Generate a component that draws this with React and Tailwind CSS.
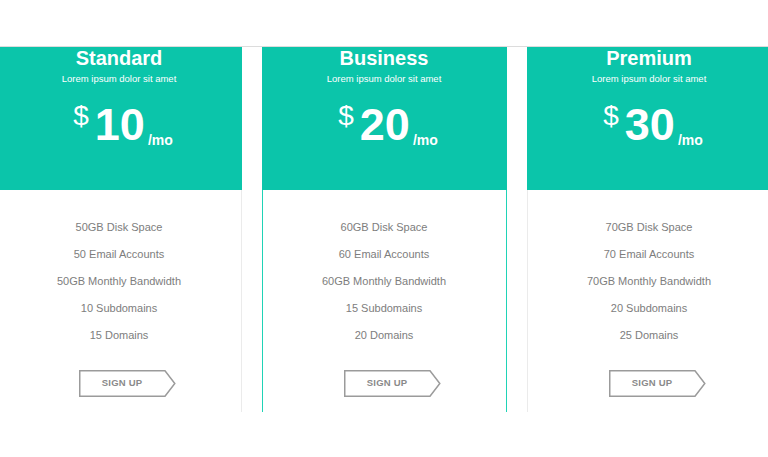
import React from "react";

const plans = [
  {
    name: "Standard",
    price: "10",
    features: ["50GB Disk Space", "50 Email Accounts", "50GB Monthly Bandwidth", "10 Subdomains", "15 Domains"],
    border: "border-[#ebebeb]",
  },
  {
    name: "Business",
    price: "20",
    features: ["60GB Disk Space", "60 Email Accounts", "60GB Monthly Bandwidth", "15 Subdomains", "20 Domains"],
    border: "border-[#1fd3b6]",
  },
  {
    name: "Premium",
    price: "30",
    features: ["70GB Disk Space", "70 Email Accounts", "70GB Monthly Bandwidth", "20 Subdomains", "25 Domains"],
    border: "border-[#ebebeb]",
  },
];

function SignUp() {
  return (
    <div className="relative w-[97px] h-[27px] ml-[17px] mt-[21px]">
      <svg className="absolute inset-0" width="97" height="27" viewBox="0 0 97 27">
        <path d="M0.75 0.75 H86 L95.8 13.5 L86 26.25 H0.75 Z" fill="none" stroke="#9b9b9b" strokeWidth="1.5" />
      </svg>
      <div className="relative w-[86px] h-[27px] flex items-center justify-center text-[9.5px] font-bold text-[#8a8a8a] tracking-[0.2px]">
        SIGN UP
      </div>
    </div>
  );
}

function Card({ plan }) {
  return (
    <div className="w-[245px] shrink-0 flex flex-col">
      <div className="h-[143px] bg-[#0bc5aa] flex flex-col items-center text-white">
        <div className="text-[20px] leading-[22px] font-bold">{plan.name}</div>
        <div className="text-[9.5px] leading-[12px] mt-[4px]">Lorem ipsum dolor sit amet</div>
        <div className="flex items-end mt-[17px] ml-[8px] h-[45px]">
          <span className="self-start text-[28px] leading-none">$</span>
          <span className="text-[45px] leading-none font-bold ml-[6px]">{plan.price}</span>
          <span className="text-[14px] leading-none font-bold ml-[3px]">/mo</span>
        </div>
      </div>
      <div className={`flex-1 border-x ${plan.border} flex flex-col items-center pt-[24px] pb-[14px]`}>
        {plan.features.map((f) => (
          <div key={f} className="text-[11px] leading-[27px] text-[#7d7d7d]">{f}</div>
        ))}
        <SignUp />
      </div>
    </div>
  );
}

export default function App() {
  return (
    <div className="w-[768px] h-[457px] bg-white font-['Liberation_Sans',Arial,sans-serif] pt-[46px]">
      <div className="h-[366px] border-t border-[#dcdcdc] overflow-hidden flex justify-center gap-[20px]">
        {plans.map((p) => (
          <Card key={p.name} plan={p} />
        ))}
      </div>
    </div>
  );
}
